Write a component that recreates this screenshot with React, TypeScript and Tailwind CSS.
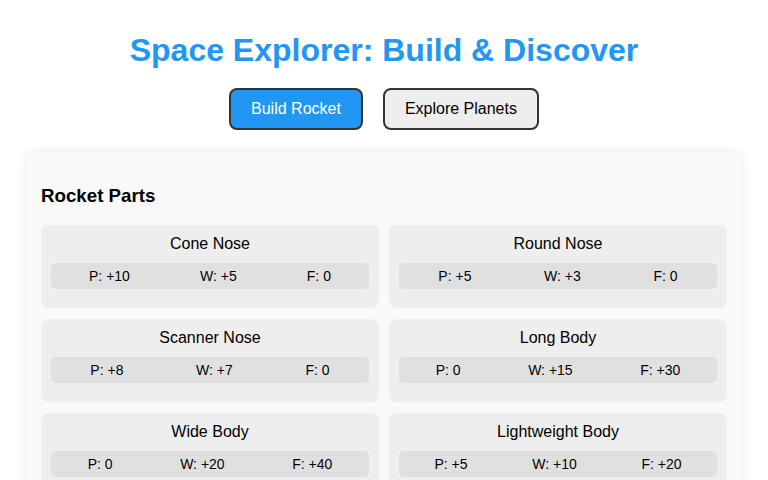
const PARTS = [
  { name: 'Cone Nose', p: '+10', w: '+5', f: '0' },
  { name: 'Round Nose', p: '+5', w: '+3', f: '0' },
  { name: 'Scanner Nose', p: '+8', w: '+7', f: '0' },
  { name: 'Long Body', p: '0', w: '+15', f: '+30' },
  { name: 'Wide Body', p: '0', w: '+20', f: '+40' },
  { name: 'Lightweight Body', p: '+5', w: '+10', f: '+20' },
  { name: 'Ion Engine', p: '+15', w: '+10', f: '0' },
  { name: 'Chemical Engine', p: '+25', w: '+20', f: '0' },
];

export default function App() {
  return (
    <div className="min-h-screen bg-white px-[26px] pt-[32px] font-['Liberation_Sans',Arial,sans-serif] text-black">
      <h1 className="text-center text-[32px] font-bold leading-[37px] text-[#2196f3]">
        Space Explorer: Build &amp; Discover
      </h1>

      <div className="mt-[19px] flex justify-center gap-5">
        <button className="h-[42px] rounded-lg border-2 border-[#333] bg-[#2196f3] px-5 text-base text-white">
          Build Rocket
        </button>
        <button className="h-[42px] rounded-lg border-2 border-[#333] bg-[#eeeeee] px-5 text-base text-black">
          Explore Planets
        </button>
      </div>

      <div className="mt-[22px] rounded-[10px] bg-[#f9f9f9] px-[15px] pt-[14px] pb-5 shadow-[0_0_10px_rgba(0,0,0,0.1)]">
        <h3 className="my-[19px] text-[18.72px] font-bold leading-[21px]">Rocket Parts</h3>
        <div className="grid grid-cols-2 gap-[10px] gap-y-[11px]">
          {PARTS.map((part) => (
            <div key={part.name} className="rounded-lg bg-[#eeeeee] px-[10px] pt-[10px] pb-[19px]">
              <div className="text-center text-base leading-[18px]">{part.name}</div>
              <div className="mt-[10px] flex h-[26px] items-center justify-around rounded-[5px] bg-[#e0e0e0] px-[3px] text-sm">
                <span>P: {part.p}</span>
                <span>W: {part.w}</span>
                <span>F: {part.f}</span>
              </div>
            </div>
          ))}
        </div>
      </div>
    </div>
  );
}
